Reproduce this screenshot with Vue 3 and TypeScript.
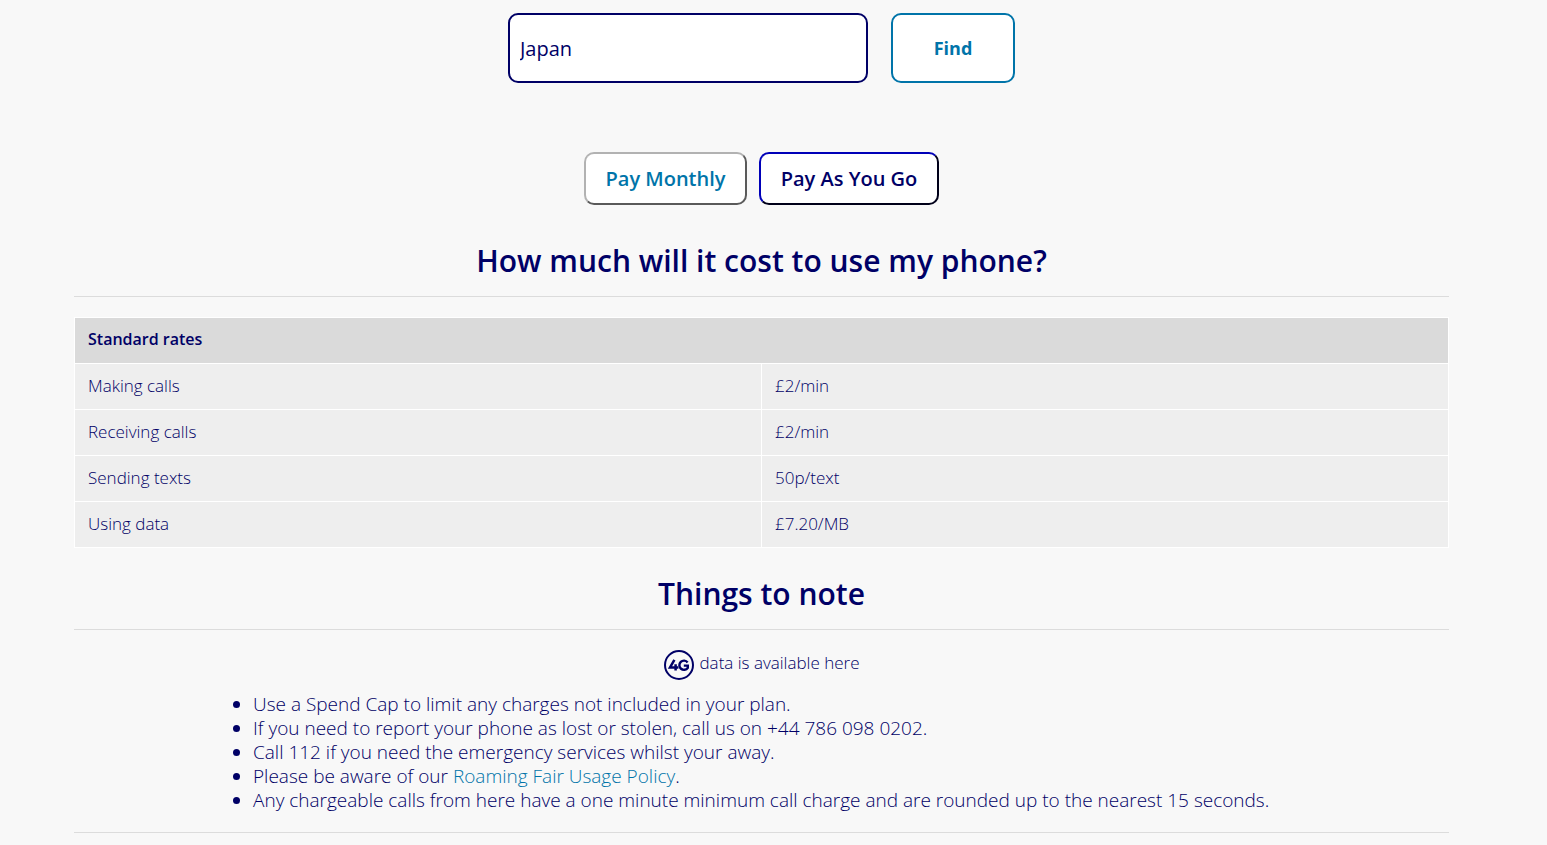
<script setup lang="ts">
import { ref } from 'vue'

interface Rate {
  label: string
  price: string
}

const country = ref('Japan')
const plans = ['Pay Monthly', 'Pay As You Go']
const activePlan = ref('Pay As You Go')
const rates: Rate[] = [
  { label: 'Making calls', price: '£2/min' },
  { label: 'Receiving calls', price: '£2/min' },
  { label: 'Sending texts', price: '50p/text' },
  { label: 'Using data', price: '£7.20/MB' },
]
</script>

<template>
  <main class="page">
    <form class="search" @submit.prevent>
      <input v-model="country" class="search-input" type="text" aria-label="Country" />
      <button class="search-button" type="submit">Find</button>
    </form>

    <div class="plans">
      <button
        v-for="plan in plans"
        :key="plan"
        type="button"
        class="plan"
        :class="{ active: plan === activePlan }"
        :aria-pressed="plan === activePlan"
        @click="activePlan = plan"
      >
        {{ plan }}
      </button>
    </div>

    <h2 class="title">How much will it cost to use my phone?</h2>
    <table class="rates">
      <thead>
        <tr>
          <th colspan="2" scope="colgroup">Standard rates</th>
        </tr>
      </thead>
      <tbody>
        <tr v-for="rate in rates" :key="rate.label">
          <td>{{ rate.label }}</td>
          <td>{{ rate.price }}</td>
        </tr>
      </tbody>
    </table>

    <h2 class="title">Things to note</h2>
    <p class="network">
      <svg class="badge" viewBox="0 0 30 30" role="img" aria-label="4G">
        <circle cx="15" cy="15" r="14" fill="none" stroke="currentColor" stroke-width="2" />
        <path
          d="M10.4 9.8 L6 17.4 H14.4 M11.6 14.2 V20.6"
          fill="none"
          stroke="currentColor"
          stroke-width="2.5"
        />
        <path
          d="M23.6 12.4 A4.6 4.6 0 1 0 23.8 17.8 V15.6 H19.8"
          fill="none"
          stroke="currentColor"
          stroke-width="2.4"
        />
      </svg>
      <span class="network-text">data is available here</span>
    </p>
    <ul class="notes">
      <li>Use a Spend Cap to limit any charges not included in your plan.</li>
      <li>If you need to report your phone as lost or stolen, call us on +44 786 098 0202.</li>
      <li>Call 112 if you need the emergency services whilst your away.</li>
      <li>Please be aware of our <a href="#">Roaming Fair Usage Policy</a>.</li>
      <li>
        Any chargeable calls from here have a one minute minimum call charge and are rounded up to
        the nearest 15 seconds.
      </li>
    </ul>
    <hr class="rule" />
  </main>
</template>

<style>
body {
  background: #f8f8f8;
}
</style>

<style scoped>
.page {
  padding: 13px 98px 12px 74px;
  color: #000066;
  font-family: "Open Sans", "Noto Sans", sans-serif;
  font-weight: 300;
}

.search {
  display: flex;
  justify-content: center;
  gap: 23px;
}

.search-input {
  box-sizing: border-box;
  width: 360px;
  height: 70px;
  padding: 0 10px;
  border: 2px solid #000066;
  border-radius: 10px;
  background: #fff;
  color: #000066;
  font: 400 20px/24px "Open Sans", "Noto Sans", sans-serif;
  outline: none;
}

.search-button {
  width: 124px;
  border: 2px solid #0074a9;
  border-radius: 10px;
  background: #fff;
  color: #0074a9;
  font: 700 18px/24px "Open Sans", "Noto Sans", sans-serif;
}

.plans {
  display: flex;
  justify-content: center;
  gap: 12px;
  margin-top: 69px;
}

.plan {
  box-sizing: border-box;
  min-width: 163px;
  height: 53px;
  padding: 0 16px;
  border: 2px solid;
  border-color: #b2b2b2 #5a5a5a #5a5a5a #b2b2b2;
  border-radius: 10px;
  background: #fff;
  color: #0074a9;
  font: 600 20px/24px "Open Sans", "Noto Sans", sans-serif;
}

.plan.active {
  min-width: 180px;
  border-color: #0000b8 #000019 #000019 #0000b8;
  color: #000066;
}

.title {
  margin: 36px 0 20px;
  padding-bottom: 15px;
  border-bottom: 1px solid #dcdcdc;
  font-size: 30px;
  font-weight: 600;
  line-height: 40px;
  text-align: center;
}

.rates {
  width: 100%;
  border-collapse: collapse;
  table-layout: fixed;
  font-size: 17px;
  line-height: 21px;
}

.rates th,
.rates td {
  padding: 11px 13px 13px;
  border: 1px solid #fff;
  text-align: left;
}

.rates th {
  background: #dadada;
  font-size: 16px;
  font-weight: 600;
}

.rates td {
  background: #eee;
}

.rates + .title {
  margin-top: 26px;
}

.network {
  display: flex;
  align-items: center;
  justify-content: center;
  gap: 6px;
  margin: 0;
  font-size: 17px;
  line-height: 26px;
}

.network-text {
  padding-bottom: 4px;
}

.badge {
  width: 30px;
  height: 30px;
}

.notes {
  margin: 12px 0 20px;
  padding-left: 179px;
  font-size: 19px;
  line-height: 24px;
}

.notes a {
  color: #0074a9;
  text-decoration: none;
}

.rule {
  margin: 0;
  border: 0;
  border-top: 1px solid #dcdcdc;
}
</style>
